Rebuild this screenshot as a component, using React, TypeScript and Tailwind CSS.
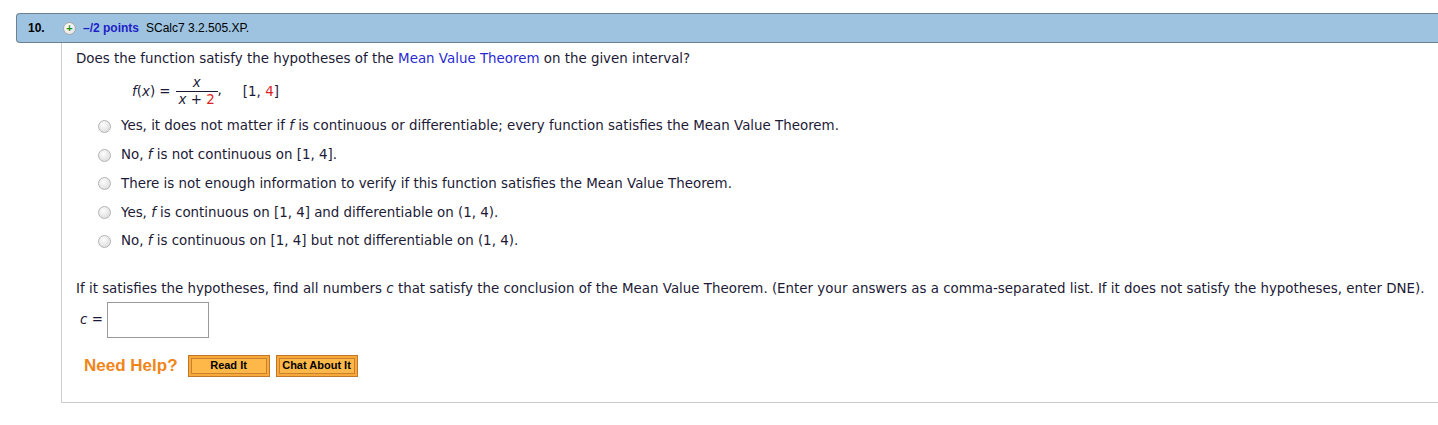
const body = { fontFamily: '"DejaVu Sans", Verdana, sans-serif' };
const arial = { fontFamily: '"Liberation Sans", Arial, sans-serif' };

const Radio = () => (
    <span className="inline-block h-[13px] w-[13px] shrink-0 rounded-full border border-[#b5b5b5] bg-[radial-gradient(circle_at_40%_35%,_#fdfdfd,_#d6d6d6)]" />
);

const F = () => <i className="italic">f</i>;

const options = [
    <>Yes, it does not matter if <F /> is continuous or differentiable; every function satisfies the Mean Value Theorem.</>,
    <>No, <F /> is not continuous on [1, 4].</>,
    <>There is not enough information to verify if this function satisfies the Mean Value Theorem.</>,
    <>Yes, <F /> is continuous on [1, 4] and differentiable on (1, 4).</>,
    <>No, <F /> is continuous on [1, 4] but not differentiable on (1, 4).</>,
];

const HelpButton = ({ label, width }: { label: string; width: string }) => (
    <button
        className={`h-[22px] ${width} border border-[#c0772a] bg-[#f9a83a] p-[2px]`}
        style={arial}
    >
        <span className="flex h-full w-full items-center justify-center border border-[#c9812d] bg-[#fdb849] text-[11px] font-bold leading-none text-black">
            {label}
        </span>
    </button>
);

const App = () => {
    return (
        <div className="min-h-[425px] w-[1438px] bg-white pt-[13px]">
            {/* Question header */}
            <div
                className="ml-[16px] flex h-[30px] items-center rounded-l-[4px] border border-r-0 border-[#6e8190] bg-[#9dc3e0] text-[12px] text-black"
                style={arial}
            >
                <span className="ml-[11px] w-[35px] font-bold">10.</span>
                <span className="flex h-[13px] w-[13px] items-center justify-center rounded-full border border-[#a8a8a8] bg-[radial-gradient(circle_at_40%_35%,_#ffffff,_#dcdcdc)] text-[11px] font-bold leading-none text-[#1a8a1a]">
                    +
                </span>
                <span className="ml-[7px] font-bold text-[#1f1fc8]">–/2 points</span>
                <span className="ml-[7px]">SCalc7 3.2.505.XP.</span>
            </div>

            {/* Question body */}
            <div
                className="ml-[61px] h-[360px] border-b border-l border-[#cccccc] pl-[14px] text-[13.4px] text-[#1c1a36]"
                style={body}
            >
                <p className="pt-[7px] leading-[18px]">
                    Does the function satisfy the hypotheses of the <span className="text-[#2a2ad0]">Mean Value Theorem</span> on the given interval?
                </p>

                <div className="ml-[56px] mt-[7px] flex items-center leading-[16px]">
                    <span>
                        <i>f</i>(<i>x</i>) =
                    </span>
                    <span className="ml-[5px] inline-flex flex-col items-center">
                        <i className="px-[2px]">x</i>
                        <span className="w-[42px] border-t border-[#1c1a36]" />
                        <span>
                            <i>x</i> + <span className="text-[#dd1f1f]">2</span>
                        </span>
                    </span>
                    <span className="-mt-[4px]">,</span>
                    <span className="ml-[21px]">
                        [1, <span className="text-[#dd1f1f]">4</span>]
                    </span>
                </div>

                <div className="ml-[22px] mt-[4px] flex flex-col">
                    {options.map((opt, idx) => (
                        <label key={idx} className="flex h-[28.75px] items-center gap-[10px]">
                            <Radio />
                            <span>{opt}</span>
                        </label>
                    ))}
                </div>

                <p className="mt-[24px] leading-[18px]">
                    If it satisfies the hypotheses, find all numbers <i>c</i> that satisfy the conclusion of the Mean Value Theorem. (Enter your answers as a comma-separated list. If it does not satisfy the hypotheses, enter DNE).
                </p>

                <div className="mt-[4px] flex items-center">
                    <span className="ml-[4px] mr-[4px]">
                        <i>c</i> =
                    </span>
                    <input className="h-[36px] w-[102px] border border-[#999999] bg-white outline-none" />
                </div>

                <div className="mt-[15px] flex items-center" style={arial}>
                    <span className="ml-[8px] mr-[10px] text-[17px] font-bold text-[#f08519]">Need Help?</span>
                    <HelpButton label="Read It" width="w-[82px]" />
                    <span className="w-[6px]" />
                    <HelpButton label="Chat About It" width="w-[82px]" />
                </div>
            </div>
        </div>
    );
};

export default App;
